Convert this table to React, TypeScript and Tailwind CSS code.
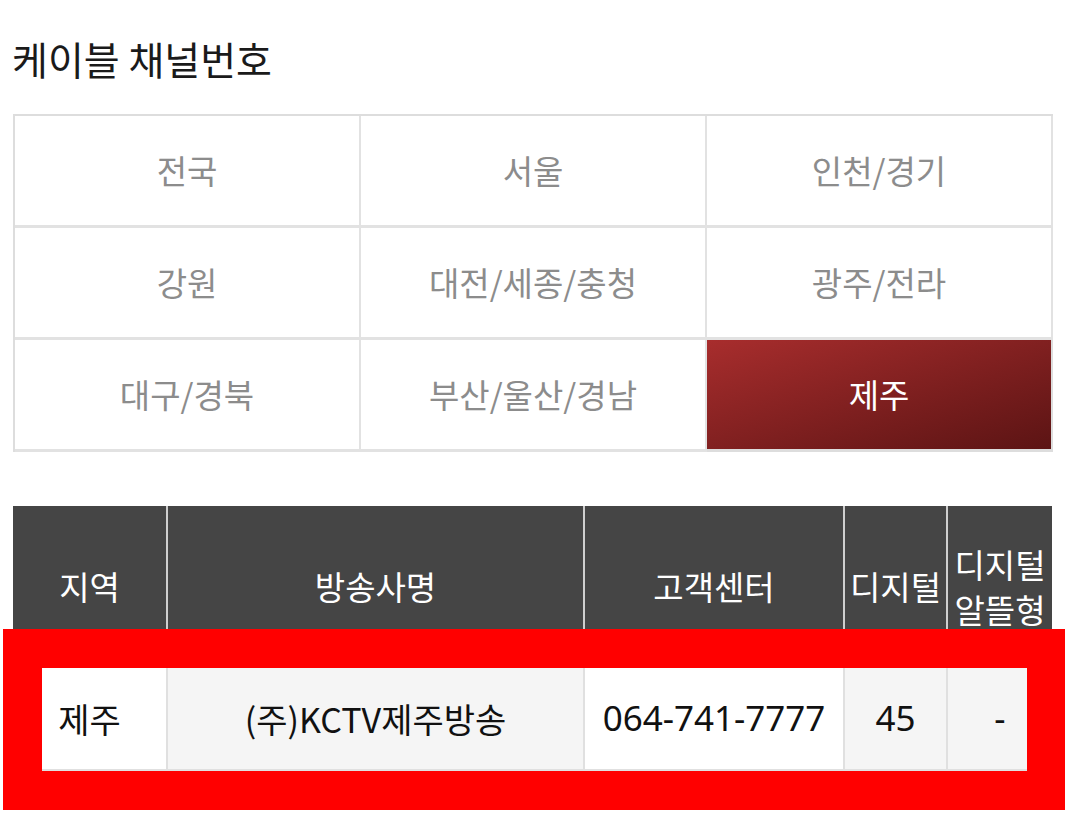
import React from "react";

const regions = [
  "전국",
  "서울",
  "인천/경기",
  "강원",
  "대전/세종/충청",
  "광주/전라",
  "대구/경북",
  "부산/울산/경남",
  "제주",
];

const latin = { fontFamily: '"Noto Sans", "Noto Sans CJK KR", sans-serif' };

export default function App() {
  return (
    <div
      className="relative w-[1072px] h-[828px] overflow-hidden bg-white"
      style={{ fontFamily: '"Noto Sans CJK KR", "Noto Sans", sans-serif' }}
    >
      <h1 className="pt-[31px] pl-[12px] h-[86px] text-[39px] leading-[54px] font-normal text-[#1a1a1a]">
        케이블 채널번호
      </h1>

      <div className="mt-[28px] ml-[13px] w-[1040px] grid grid-cols-3 border-t-2 border-l-2 border-[#dddddd]">
        {regions.map((r) => {
          const active = r === "제주";
          return (
            <div
              key={r}
              className={
                active
                  ? "h-[112px] flex items-center justify-center border-r-2 border-b-[3px] border-[#dddddd] bg-gradient-to-br from-[#a82d2d] to-[#5c1414] text-white text-[33px]"
                  : "h-[112px] flex items-center justify-center border-r-2 border-b-[3px] border-[#e2e2e2] text-[#8c8c8c] text-[33px]"
              }
            >
              {r}
            </div>
          );
        })}
      </div>

      <div className="relative mt-[54px] ml-[13px] w-[1039px]">
        <div className="flex h-[162px] bg-[#454545] text-white text-[33px] divide-x-2 divide-[#cfcfcf]">
          <div className="w-[155px] flex items-center justify-center">지역</div>
          <div className="w-[417px] flex items-center justify-center">방송사명</div>
          <div className="w-[260px] flex items-center justify-center">고객센터</div>
          <div className="w-[103px] flex items-center justify-center">디지털</div>
          <div className="w-[104px] flex items-center justify-center text-center leading-[45px]">
            디지털
            <br />
            알뜰형
          </div>
        </div>
        <div className="flex h-[103px] text-[#111111] text-[34px] divide-x-2 divide-[#e0e0e0] border-b-2 border-[#e0e0e0]">
          <div className="w-[155px] flex items-center justify-center bg-white">제주</div>
          <div className="w-[417px] flex items-center justify-center bg-[#f5f5f5]">(주)KCTV제주방송</div>
          <div className="w-[260px] flex items-center justify-center bg-white text-[35px]" style={latin}>
            064-741-7777
          </div>
          <div className="w-[103px] flex items-center justify-center bg-[#f5f5f5] text-[35px]" style={latin}>
            45
          </div>
          <div className="w-[104px] flex items-center justify-center bg-[#f5f5f5] text-[35px]" style={latin}>
            -
          </div>
        </div>
        <div className="absolute left-[-10px] top-[123px] w-[1062px] h-[181px] border-[39px] border-r-[38px] border-[#ff0000]" />
      </div>
    </div>
  );
}
